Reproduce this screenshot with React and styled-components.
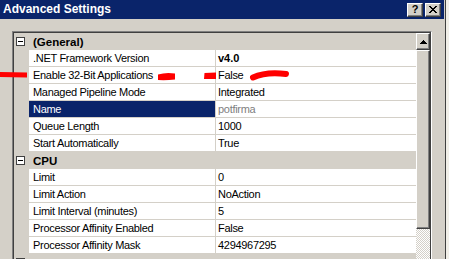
import React from "react";
import styled, { createGlobalStyle } from "styled-components";

const Global = createGlobalStyle`
  html, body { margin: 0; padding: 0; background: #d4d0c8; }
  body { font-family: "Liberation Sans", Arial, sans-serif; }
`;

const Screen = styled.div`
  position: relative;
  width: 449px;
  height: 259px;
  overflow: hidden;
  display: flex;
`;

const Window = styled.div`
  width: 445px;
  height: 259px;
  background: #d4d0c8;
  border-right: 1px solid #404040;
  display: flex;
  flex-direction: column;
`;

const Edge = styled.div`
  flex: 1;
  background: #f1efe8;
`;

const TitleBar = styled.div`
  height: 19px;
  background: #0a246a;
  display: flex;
  align-items: center;
  padding: 0 3px 0 3px;
  flex-shrink: 0;
  margin-right: 1px;
`;

const Title = styled.div`
  flex: 1;
  color: #fff;
  font-weight: bold;
  font-size: 12px;
  line-height: 19px;
`;

const CaptionButton = styled.div`
  width: 16px;
  height: 14px;
  box-sizing: border-box;
  background: #d4d0c8;
  border-top: 1px solid #fff;
  border-left: 1px solid #fff;
  border-right: 1px solid #404040;
  border-bottom: 1px solid #404040;
  box-shadow: inset -1px -1px 0 #808080;
  margin-left: ${(p) => p.$gap || 0}px;
  display: flex;
  align-items: center;
  justify-content: center;
  font-weight: bold;
  font-size: 11px;
  color: #000;
  line-height: 1;
`;

const Body = styled.div`
  flex: 1;
  padding: 12px 13px 0 12px;
  overflow: hidden;
`;

const Grid = styled.div`
  height: 260px;
  display: flex;
  border-top: 1px solid #808080;
  border-left: 1px solid #808080;
  border-right: 1px solid #fff;
  box-shadow: inset 1px 1px 0 #404040, inset -1px 0 0 #404040;
  padding: 1px 1px 0 1px;
`;

const Rows = styled.div`
  flex: 1;
  display: flex;
  flex-direction: column;
`;

const CategoryRow = styled.div`
  height: 17px;
  display: flex;
  align-items: center;
  background: #d4d0c8;
  flex-shrink: 0;
`;

const ToggleBox = styled.div`
  width: 9px;
  height: 9px;
  box-sizing: border-box;
  border: 1px solid #404040;
  background: #fff;
  margin: 0 8px 0 2px;
  display: flex;
  align-items: center;
  justify-content: center;
  &::after {
    content: "";
    width: 5px;
    height: 1px;
    background: #000;
  }
`;

const CategoryText = styled.div`
  font-weight: bold;
  font-size: 11.5px;
  color: #000;
`;

const PropRow = styled.div`
  height: 17px;
  display: flex;
  flex-shrink: 0;
`;

const Gutter = styled.div`
  width: 15px;
  background: #d4d0c8;
`;

const Cell = styled.div`
  box-sizing: border-box;
  height: 17px;
  border-bottom: 1px solid #d4d0c8;
  font-size: 11px;
  letter-spacing: -0.3px;
  line-height: 16px;
  white-space: nowrap;
  overflow: hidden;
`;

const Label = styled(Cell)`
  width: 187px;
  border-right: 1px solid #d4d0c8;
  padding-left: 4px;
  background: ${(p) => (p.$selected ? "#0a246a" : "#fff")};
  color: ${(p) => (p.$selected ? "#fff" : "#000")};
`;

const Value = styled(Cell)`
  flex: 1;
  padding-left: 2px;
  background: #fff;
  color: ${(p) => (p.$muted ? "#808080" : "#000")};
  font-weight: ${(p) => (p.$bold ? "bold" : "normal")};
  letter-spacing: ${(p) => (p.$bold ? "0" : "-0.3px")};
`;

const Scrollbar = styled.div`
  width: 14px;
  display: flex;
  flex-direction: column;
`;

const RaisedPart = styled.div`
  box-sizing: border-box;
  height: ${(p) => p.$h}px;
  flex-shrink: 0;
  background: #d4d0c8;
  border-top: 1px solid #fff;
  border-left: 1px solid #fff;
  border-right: 1px solid #404040;
  border-bottom: 1px solid #404040;
  box-shadow: inset -1px -1px 0 #808080;
  display: flex;
  align-items: center;
  justify-content: center;
`;

const Track = styled.div`
  flex: 1;
  background: repeating-conic-gradient(#d4d0c8 0 25%, #ffffff 0 50%) 0 0 / 2px 2px;
`;

const Marks = styled.svg`
  position: absolute;
  left: 0;
  top: 0;
  pointer-events: none;
`;

const general = [
  { label: ".NET Framework Version", value: "v4.0", bold: true },
  { label: "Enable 32-Bit Applications", value: "False" },
  { label: "Managed Pipeline Mode", value: "Integrated" },
  { label: "Name", value: "potfirma", selected: true, muted: true },
  { label: "Queue Length", value: "1000" },
  { label: "Start Automatically", value: "True" },
];

const cpu = [
  { label: "Limit", value: "0" },
  { label: "Limit Action", value: "NoAction" },
  { label: "Limit Interval (minutes)", value: "5" },
  { label: "Processor Affinity Enabled", value: "False" },
  { label: "Processor Affinity Mask", value: "4294967295" },
];

function Category({ name }) {
  return (
    <CategoryRow>
      <ToggleBox />
      <CategoryText>{name}</CategoryText>
    </CategoryRow>
  );
}

function Prop({ p }) {
  return (
    <PropRow>
      <Gutter />
      <Label $selected={p.selected}>{p.label}</Label>
      <Value $bold={p.bold} $muted={p.muted}>
        {p.value}
      </Value>
    </PropRow>
  );
}

export default function App() {
  return (
    <>
      <Global />
      <Screen>
        <Window>
          <TitleBar>
            <Title>Advanced Settings</Title>
            <CaptionButton>?</CaptionButton>
            <CaptionButton $gap={2}>
              <svg width="8" height="7" viewBox="0 0 8 7">
                <path
                  d="M0 0h2v1h1v1h2v-1h1v-1h2v1h-1v1h-1v1h-1v1h1v1h1v1h1v1h-2v-1h-1v-1h-2v1h-1v1h-2v-1h1v-1h1v-1h1v-1h-1v-1h-1v-1h-1z"
                  fill="#000"
                />
              </svg>
            </CaptionButton>
          </TitleBar>
          <Body>
            <Grid>
              <Rows>
                <Category name="(General)" />
                {general.map((p) => (
                  <Prop key={p.label} p={p} />
                ))}
                <Category name="CPU" />
                {cpu.map((p) => (
                  <Prop key={p.label} p={p} />
                ))}
                <Category name="Process Model" />
              </Rows>
              <Scrollbar>
                <RaisedPart $h={17}>
                  <svg width="7" height="4" viewBox="0 0 7 4">
                    <path d="M3 0h1v1h1v1h1v1h1v1h-7v-1h1v-1h1v-1h1z" fill="#000" />
                  </svg>
                </RaisedPart>
                <RaisedPart $h={179} />
                <Track />
              </Scrollbar>
            </Grid>
          </Body>
        </Window>
        <Edge />
        <Marks width="449" height="259" viewBox="0 0 449 259">
          <path d="M0 72 L27 72.5 L27 77.5 L0 77 Z" fill="#ff0000" />
          <path d="M158 74.5 Q166 72 175 73.5 L175 79.5 Q166 80.5 158 80 Z" fill="#ff0000" />
          <path d="M204.5 73 L216 72.5 L216 79 L204 79 Z" fill="#ff0000" />
          <path d="M253 77.5 Q266 71.5 286 74" stroke="#ff0000" strokeWidth="6" strokeLinecap="round" fill="none" />
        </Marks>
      </Screen>
    </>
  );
}
